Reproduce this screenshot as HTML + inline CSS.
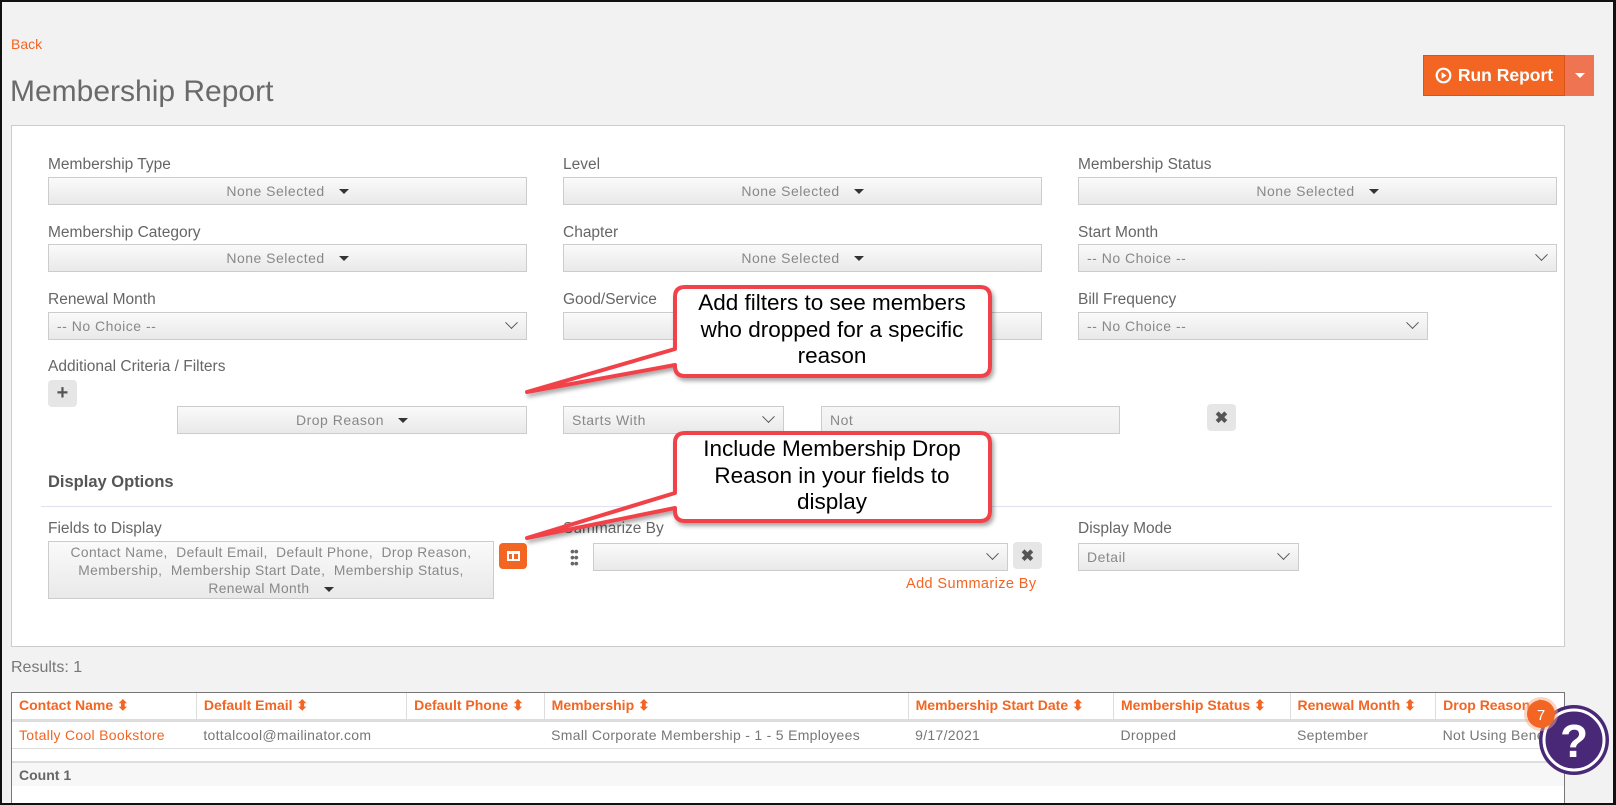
<!DOCTYPE html>
<html><head><meta charset="utf-8"><style>
*{box-sizing:border-box;margin:0;padding:0}
body{width:1616px;height:805px;overflow:hidden;background:#f2f2f2;font-family:"Liberation Sans",Arial,sans-serif;position:relative;color:#666}
.frame{position:absolute;left:0;top:0;width:1616px;height:805px;border:2px solid #111;border-right-width:3px;pointer-events:none;z-index:50}
.a{position:absolute}
.lbl{position:absolute;font-size:15.5px;color:#666;white-space:nowrap}
.sel{position:absolute;height:28px;border:1px solid #ccc;background:linear-gradient(#fafafa,#e9e9e9);font-size:14px;color:#888;letter-spacing:.5px}
.ms{display:flex;align-items:center;justify-content:center}
.ms:after{content:"";border-left:5px solid transparent;border-right:5px solid transparent;border-top:5px solid #333;margin-left:14px}
.dd{padding-left:8px;display:flex;align-items:center}
.chev{position:absolute;right:10px;top:8px;width:9px;height:9px;border-right:1.6px solid #555;border-bottom:1.6px solid #555;transform:rotate(45deg) translate(-2px,-2px)}
.xb{position:absolute;width:29px;height:27px;background:#e6e6e6;border-radius:4px;color:#555;font-size:16px;font-weight:bold;display:flex;align-items:center;justify-content:center}
.or{color:#f26522}
th,td{text-align:left;white-space:nowrap}
</style></head><body>
<div class="a or" style="left:11px;top:36px;font-size:14px">Back</div>
<div class="a" style="left:10px;top:75px;font-size:30px;color:#6a6a6a">Membership Report</div>
<div class="a" style="left:1423px;top:55px;width:142px;height:41px;background:#f26522;border:1px solid #d9531b;color:#fff;font-size:17.5px;font-weight:bold;display:flex;align-items:center;justify-content:center;gap:6px">
<svg width="17" height="17" viewBox="0 0 17 17"><circle cx="8.5" cy="8.5" r="6.8" fill="none" stroke="#fff" stroke-width="2.2"/><path d="M6.6 5.3L11.6 8.5L6.6 11.7Z" fill="#fff"/></svg>Run Report</div>
<div class="a" style="left:1565px;top:55px;width:29px;height:41px;background:#ef7552;display:flex;align-items:center;justify-content:center"><div style="border-left:5px solid transparent;border-right:5px solid transparent;border-top:5px solid #fff"></div></div>

<div class="a" style="left:11px;top:125px;width:1554px;height:522px;background:#fff;border:1px solid #ccc"></div>

<div class="lbl" style="left:48px;top:156px">Membership Type</div>
<div class="sel ms" style="left:48px;top:177px;width:479px">None Selected</div>
<div class="lbl" style="left:563px;top:156px">Level</div>
<div class="sel ms" style="left:563px;top:177px;width:479px">None Selected</div>
<div class="lbl" style="left:1078px;top:156px">Membership Status</div>
<div class="sel ms" style="left:1078px;top:177px;width:479px">None Selected</div>

<div class="lbl" style="left:48px;top:224px">Membership Category</div>
<div class="sel ms" style="left:48px;top:244px;width:479px">None Selected</div>
<div class="lbl" style="left:563px;top:224px">Chapter</div>
<div class="sel ms" style="left:563px;top:244px;width:479px">None Selected</div>
<div class="lbl" style="left:1078px;top:224px">Start Month</div>
<div class="sel dd" style="left:1078px;top:244px;width:479px">-- No Choice --<span class="chev"></span></div>

<div class="lbl" style="left:48px;top:291px">Renewal Month</div>
<div class="sel dd" style="left:48px;top:312px;width:479px">-- No Choice --<span class="chev"></span></div>
<div class="lbl" style="left:563px;top:291px">Good/Service</div>
<div class="sel dd" style="left:563px;top:312px;width:479px"></div>
<div class="lbl" style="left:1078px;top:291px">Bill Frequency</div>
<div class="sel dd" style="left:1078px;top:312px;width:350px">-- No Choice --<span class="chev"></span></div>

<div class="lbl" style="left:48px;top:358px">Additional Criteria / Filters</div>
<div class="xb" style="left:48px;top:380px;font-size:20px">+</div>
<div class="sel ms" style="left:177px;top:406px;width:350px">Drop Reason</div>
<div class="sel dd" style="left:563px;top:406px;width:221px">Starts With<span class="chev"></span></div>
<div class="sel dd" style="left:821px;top:406px;width:299px;background:linear-gradient(#f6f6f6,#eee)">Not</div>
<div class="xb" style="left:1207px;top:404px">✖</div>

<div class="a" style="left:48px;top:473px;font-size:16.5px;font-weight:bold;color:#555">Display Options</div>
<div class="a" style="left:41px;top:506px;width:1511px;height:1px;background:#e2e0ee"></div>

<div class="lbl" style="left:48px;top:520px">Fields to Display</div>
<div class="sel" style="left:48px;top:541px;width:446px;height:58px;text-align:center;font-size:13.8px;line-height:18px;padding-top:2px;letter-spacing:.4px">Contact Name,&nbsp; Default Email,&nbsp; Default Phone,&nbsp; Drop Reason,<br>Membership,&nbsp; Membership Start Date,&nbsp; Membership Status,<br>Renewal Month <span style="display:inline-block;margin-left:10px;border-left:5px solid transparent;border-right:5px solid transparent;border-top:5px solid #333;vertical-align:middle"></span></div>
<div class="a" style="left:499px;top:543px;width:28px;height:26px;background:#f26522;border-radius:4px;display:flex;align-items:center;justify-content:center"><div style="width:13px;height:10px;border:2px solid #fff;border-top-width:3px;position:relative"><div style="position:absolute;left:3.5px;top:0;width:2px;height:5px;background:#fff"></div></div></div>

<div class="lbl" style="left:563px;top:520px">Summarize By</div>
<div class="a" style="left:570px;top:548px;font-size:14px;color:#666;letter-spacing:-1px;line-height:6px">••<br>••<br>••</div>
<div class="sel" style="left:593px;top:543px;width:415px"><span class="chev"></span></div>
<div class="xb" style="left:1013px;top:542px">✖</div>
<div class="a or" style="left:906px;top:576px;font-size:14.5px;letter-spacing:.4px">Add Summarize By</div>

<div class="lbl" style="left:1078px;top:520px">Display Mode</div>
<div class="sel dd" style="left:1078px;top:543px;width:221px">Detail<span class="chev"></span></div>

<div class="a" style="left:11px;top:659px;font-size:16px;color:#777">Results: 1</div>

<div class="a" style="left:11px;top:692px;width:1554px;height:113px;background:#fff;border:1px solid #777;border-bottom:none">
<table style="border-collapse:collapse;width:100%;font-size:14px">
<tr style="height:27px;color:#f26522;font-weight:bold;border-bottom:3px solid #ddd">
<th style="width:185px;padding-left:7px">Contact Name ⬍</th>
<th style="width:211px;padding-left:7px;border-left:1px solid #ddd">Default Email ⬍</th>
<th style="width:138px;padding-left:7px;border-left:1px solid #ddd">Default Phone ⬍</th>
<th style="width:365px;padding-left:7px;border-left:1px solid #ddd">Membership ⬍</th>
<th style="width:206px;padding-left:7px;border-left:1px solid #ddd">Membership Start Date ⬍</th>
<th style="width:177px;padding-left:7px;border-left:1px solid #ddd">Membership Status ⬍</th>
<th style="width:146px;padding-left:7px;border-left:1px solid #ddd">Renewal Month ⬍</th>
<th style="padding-left:7px;border-left:1px solid #ddd">Drop Reason ⬍</th></tr>
<tr style="height:28px;color:#777;border-bottom:1px solid #ddd;letter-spacing:.3px">
<td style="padding-left:7px;color:#f26522">Totally Cool Bookstore</td><td style="padding-left:7px">tottalcool@mailinator.com</td><td></td><td style="padding-left:7px">Small Corporate Membership - 1 - 5 Employees</td><td style="padding-left:7px">9/17/2021</td><td style="padding-left:7px">Dropped</td><td style="padding-left:7px">September</td><td style="padding-left:7px">Not Using Benefits</td></tr>
</table>
<div style="margin-top:12px;border-top:2px solid #ddd;background:#f7f7f7;height:25px;padding-left:7px;font-size:14px;font-weight:bold;color:#666;line-height:25px">Count 1</div>
</div>

<svg class="a" style="left:0;top:0;z-index:20" width="1616" height="805">
<defs><filter id="sh" x="-10%" y="-10%" width="130%" height="140%"><feDropShadow dx="2" dy="3" stdDeviation="2" flood-opacity=".35"/></filter></defs>
<g filter="url(#sh)">
<path d="M685 287H980Q990 287 990 297V366Q990 376 980 376H685Q675 376 675 366V365L527 392L675 349V297Q675 287 685 287Z" fill="#fff" stroke="#f1424a" stroke-width="4" stroke-linejoin="round"/>
<path d="M685 433H980Q990 433 990 443V511Q990 521 980 521H685Q675 521 675 511V508L527 538L675 493V443Q675 433 685 433Z" fill="#fff" stroke="#f1424a" stroke-width="4" stroke-linejoin="round"/>
</g>
<g font-family="Liberation Sans,Arial,sans-serif" font-size="22.5" fill="#000" text-anchor="middle">
<text x="832" y="310">Add filters to see members</text>
<text x="832" y="337">who dropped for a specific</text>
<text x="832" y="363">reason</text>
<text x="832" y="456">Include Membership Drop</text>
<text x="832" y="483">Reason in your fields to</text>
<text x="832" y="509">display</text>
</g>
<circle cx="1574" cy="740" r="35" fill="#4a2878"/>
<circle cx="1574" cy="740" r="30" fill="none" stroke="#fff" stroke-width="3"/>
<text x="1574" y="757" font-family="Liberation Sans,Arial,sans-serif" font-size="46" font-weight="bold" fill="#fff" text-anchor="middle">?</text>
<circle cx="1541" cy="714" r="17" fill="#f7a98a" opacity=".5"/>
<circle cx="1541" cy="714" r="14" fill="#f26522"/>
<text x="1541" y="720" font-family="Liberation Sans,Arial,sans-serif" font-size="15" fill="#fff" text-anchor="middle">7</text>
</svg>
<div class="frame"></div>
</body></html>
